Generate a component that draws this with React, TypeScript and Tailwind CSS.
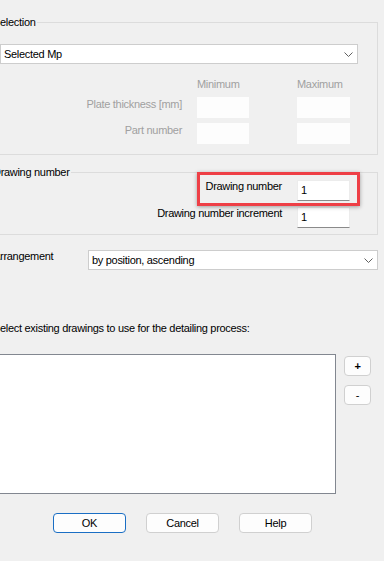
import type { ReactNode } from 'react';

function Chevron() {
  return (
    <svg width="9" height="5" viewBox="0 0 9 5" className="shrink-0">
      <polyline points="0.5,0.5 4.5,4.5 8.5,0.5" fill="none" stroke="#606060" strokeWidth="1" />
    </svg>
  );
}

function Combo({ value, className }: { value: string; className: string }) {
  return (
    <div
      className={`flex h-[20px] items-center justify-between border border-[#cdcdcd] bg-white pr-[4px] pl-[3px] ${className}`}
    >
      <span className="text-black">{value}</span>
      <Chevron />
    </div>
  );
}

function Group({ title, className, children }: { title: string; className?: string; children: ReactNode }) {
  return (
    <div className={`w-[394px] border border-[#dcdcdc] ${className ?? ''}`}>
      <div className="-mt-[8px] ml-[7px] h-[15px] w-fit bg-[#f0f0f0] px-[1px] leading-[15px] text-black">
        {title}
      </div>
      {children}
    </div>
  );
}

function Btn({ label, primary, className }: { label: string; primary?: boolean; className?: string }) {
  return (
    <button
      className={`flex h-[20px] items-center justify-center rounded-[4px] border bg-[#fdfdfd] text-black ${
        primary ? 'border-[#1a6ec4]' : 'border-[#d0d0d0]'
      } ${className ?? ''}`}
    >
      {label}
    </button>
  );
}

const disabledBox = 'h-[21px] bg-[#fdfdfd]';
const activeBox =
  'flex h-[21px] w-[53px] items-center border border-[#ececec] border-b-[#8a8a8a] bg-white pl-[3px] text-black';

export default function App() {
  return (
    <div className="relative h-[561px] w-[384px] overflow-hidden bg-[#f0f0f0] font-['Liberation_Sans',Arial,sans-serif] text-[11px] leading-[13px] tracking-[-0.3px]">
      <div className="-ml-[16px] w-[394px] pt-[22px]">
        <Group title="Selection" className="pb-[10px]">
          <Combo value="Selected Mp" className="mt-[14px] ml-[15px] w-[358px]" />
          <div className="mt-[14px] flex h-[13px] text-[#a0a0a0]">
            <div className="w-[197px]" />
            <div className="ml-[15px] w-[52px]">Minimum</div>
            <div className="ml-[48px] w-[53px]">Maximum</div>
          </div>
          <div className="mt-[6px] flex items-start">
            <div className="w-[197px] pt-[1px] text-right text-[#a0a0a0]">Plate thickness [mm]</div>
            <div className={`ml-[15px] w-[52px] ${disabledBox}`} />
            <div className={`ml-[48px] w-[53px] ${disabledBox}`} />
          </div>
          <div className="mt-[5px] flex items-start">
            <div className="w-[197px] pt-[1px] text-right text-[#a0a0a0]">Part number</div>
            <div className={`ml-[15px] w-[52px] ${disabledBox}`} />
            <div className={`ml-[48px] w-[53px] ${disabledBox}`} />
          </div>
        </Group>

        <Group title="Drawing number" className="mt-[17px] pb-[6px]">
          <div className="flex items-start">
            <div className="w-[297px] text-right text-black">Drawing number</div>
            <div className={`ml-[15px] ${activeBox}`}>1</div>
          </div>
          <div className="mt-[6px] flex items-start">
            <div className="w-[297px] text-right text-black">Drawing number increment</div>
            <div className={`ml-[15px] ${activeBox}`}>1</div>
          </div>
        </Group>

        <div className="mt-[15px] flex items-start">
          <div className="ml-[9px] w-[95px] text-black">Arrangement</div>
          <Combo value="by position, ascending" className="w-[290px]" />
        </div>

        <div className="mt-[52px] ml-[9px] text-black">
          Select existing drawings to use for the detailing process:
        </div>

        <div className="mt-[19px] flex items-start">
          <div className="ml-[6px] h-[140px] w-[346px] border border-[#828790] bg-white" />
          <div className="ml-[8px] flex flex-col">
            <Btn label="+" className="mt-[2px] w-[27px] font-bold" />
            <Btn label="-" className="mt-[9px] w-[27px]" />
          </div>
        </div>

        <div className="mt-[19px] ml-[69px] flex gap-[20px]">
          <Btn label="OK" primary className="w-[73px]" />
          <Btn label="Cancel" className="w-[73px]" />
          <Btn label="Help" className="w-[73px]" />
        </div>
      </div>

      {/* annotation highlight */}
      <div className="pointer-events-none absolute top-[172px] left-[197px] h-[34px] w-[163px] border-[3px] border-[#ee3f46] shadow-[0_1px_4px_rgba(0,0,0,0.35)]" />
    </div>
  );
}
